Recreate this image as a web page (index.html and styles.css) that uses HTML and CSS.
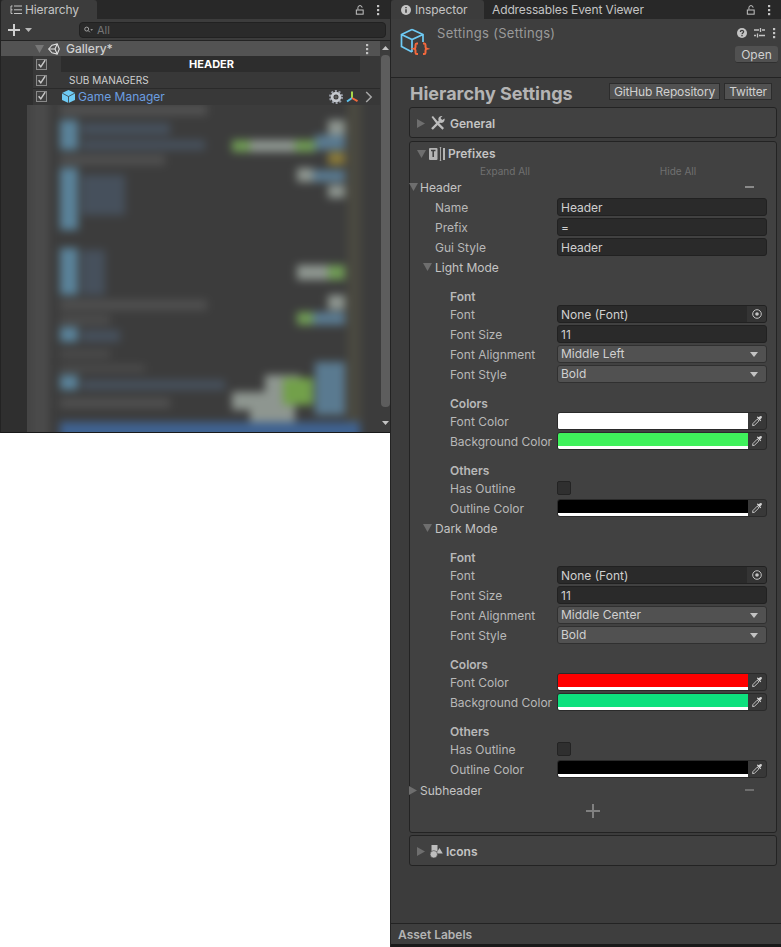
FILE: index.html
```html
<!DOCTYPE html>
<html lang="en">
<head>
<meta charset="utf-8">
<title>Hierarchy Settings</title>
<link rel="stylesheet" href="styles.css">
</head>
<body>
<svg class="defs" width="0" height="0" aria-hidden="true">
  <defs>
    <symbol id="lock" viewBox="0 0 12 12"><path d="M3.500 5.500V3.200a2.500 2.500 0 0 1 5 0" fill="none" stroke="currentColor" stroke-width="1.200"/><rect x="1.600" y="6" width="8.200" height="5" fill="none" stroke="currentColor" stroke-width="1.200"/></symbol>
    <symbol id="kebab" viewBox="0 0 4 12"><rect x="1" y="1" width="2.200" height="2.200"/><rect x="1" y="5" width="2.200" height="2.200"/><rect x="1" y="9" width="2.200" height="2.200"/></symbol>
    <symbol id="check" viewBox="0 0 11 11"><rect x=".5" y=".5" width="10" height="10" fill="#404040" stroke="#8a8a8a"/><path d="M2.600 5.200l2.200 2.600 4.400-6.600" fill="none" stroke="#c8c8c8" stroke-width="1.500"/></symbol>
    <symbol id="dropper" viewBox="0 0 12 12"><path d="M1.600 10.600l.3-2 4.300-4.400 1.700 1.700-4.400 4.300z" fill="none" stroke="#c4c4c4" stroke-width="1"/><path d="M6 2.800l3.400 3.400 .8-.8-1-1 1.400-1.500a1.100 1.100 0 0 0-1.600-1.600L7.600 2.200l-1-1z" fill="#d2d2d2"/></symbol>
  </defs>
</svg>

<main class="page">
  <section class="panel hierarchy">
    <header class="tabbar">
      <div class="tab tab-hier">
        <svg class="tab-icon" viewBox="0 0 12 10"><path d="M1 1h1.500M1 1v7.500h1.500M1 4.800h1.500M4 1h8M4 4.800h8M4 8.500h8" fill="none" stroke="#c4c4c4"/></svg>
        <span>Hierarchy</span>
      </div>
      <div class="tab-actions tab-actions-hier">
        <svg class="ico-lock"><use href="#lock"/></svg>
        <svg class="ico-kebab"><use href="#kebab"/></svg>
      </div>
    </header>
    <div class="toolbar">
      <div class="add-btn">
        <svg class="plus" viewBox="0 0 12 12"><path d="M6 0v12M0 6h12" stroke="#d0d0d0" stroke-width="2"/></svg>
        <svg class="caret" viewBox="0 0 7 4"><path d="M0 0h7L3.500 4z" fill="#b8b8b8"/></svg>
      </div>
      <div class="search">
        <svg class="search-icon" viewBox="0 0 10 8"><circle cx="3" cy="3" r="2.200" fill="none" stroke="#b0b0b0"/><path d="M4.800 4.800l1.700 1.700" stroke="#b0b0b0"/><path d="M7 3h3L8.500 5z" fill="#909090"/></svg>
        <span>All</span>
      </div>
    </div>
    <div class="hier-body">
      <div class="hier-list">
        <div class="scene-row">
          <svg class="scene-tri" viewBox="0 0 9 8"><path d="M0 0h9L4.500 8z" fill="#777"/></svg>
          <svg class="unity-logo" viewBox="0 0 12 12"><path d="M.7 6L4 2.200 9.200 .9 11.300 6 9.200 11.100 4 9.800z" fill="none" stroke="#e0e0e0" stroke-width="1.100"/><path d="M.7 6H7M7 6L9.200 .9M7 6l2.200 5.100" fill="none" stroke="#e0e0e0" stroke-width="1.100"/></svg>
          <span class="scene-name">Gallery*</span>
          <svg class="ico-kebab scene-kebab"><use href="#kebab"/></svg>
        </div>
        <div class="go-row">
          <svg class="chk"><use href="#check"/></svg>
          <div class="go-header">HEADER</div>
        </div>
        <div class="go-row">
          <svg class="chk"><use href="#check"/></svg>
          <div class="go-sub">SUB MANAGERS</div>
        </div>
        <div class="go-row go-row-manager">
          <svg class="chk"><use href="#check"/></svg>
          <svg class="go-cube" viewBox="0 0 13 13"><path d="M6.500 0L13 3v7l-6.500 3L0 10V3z" fill="#6ecbf5"/><path d="M6.500 6.500v6.500M0 3l6.500 3.500L13 3" fill="none" stroke="#383838" stroke-width=".8"/></svg>
          <span class="go-name">Game Manager</span>
          <span class="go-tail">
            <svg class="go-gear" viewBox="0 0 14 14"><circle cx="7" cy="7" r="6" fill="none" stroke="#9a9ea8" stroke-width="2" stroke-dasharray="2 1.770"/><circle cx="7" cy="7" r="3.900" fill="none" stroke="#c4c8ce" stroke-width="2.800"/><circle cx="7" cy="7" r="1.600" fill="#5a5a5a"/></svg>
            <svg class="go-gizmo" viewBox="0 0 14 14"><path d="M7 8V1.500" stroke="#a8d84a" stroke-width="2"/><path d="M7 8l-5 3.500" stroke="#5cc4f0" stroke-width="2"/><path d="M7 8l5.500 3.200" stroke="#f0683c" stroke-width="2"/></svg>
            <svg class="go-chevron" viewBox="0 0 8 12"><path d="M1.200 1l5 5-5 5" fill="none" stroke="#a8a8a8" stroke-width="1.500"/></svg>
          </span>
        </div>
        <div class="blur-wrap">
          <svg class="blur-art" viewBox="0 0 353 328" aria-hidden="true">
            <g class="blur-group">
              <rect x="-10" y="-10" width="373" height="348" fill="#3c3c3c"/>
              <rect x="-10" y="-10" width="30" height="348" fill="#444"/>
              <rect x="6" y="-10" width="16" height="348" fill="#4b4b4b"/>
              <rect x="320" y="-10" width="14" height="330" fill="#4a4940"/>
              <rect x="33" y="0" width="147" height="10" fill="#535353"/>
              <rect x="33" y="15" width="18" height="30" fill="#5a8299"/>
              <rect x="55" y="18" width="88" height="12" fill="#46505c"/>
              <rect x="55" y="35" width="123" height="10" fill="#46505c"/>
              <rect x="205" y="35" width="18" height="12" fill="#6f9a55"/>
              <rect x="223" y="35" width="45" height="12" fill="#8e9690"/>
              <rect x="268" y="35" width="20" height="12" fill="#6f9a55"/>
              <rect x="288" y="30" width="30" height="15" fill="#5a7a90"/>
              <rect x="301" y="15" width="17" height="15" fill="#8e9690"/>
              <rect x="301" y="47" width="17" height="13" fill="#8a7a3a"/>
              <rect x="33" y="50" width="105" height="10" fill="#505050"/>
              <rect x="33" y="63" width="18" height="62" fill="#5a8299"/>
              <rect x="55" y="70" width="43" height="40" fill="#46505c"/>
              <rect x="270" y="63" width="16" height="14" fill="#8e9690"/>
              <rect x="286" y="65" width="32" height="12" fill="#5a7a90"/>
              <rect x="301" y="80" width="17" height="13" fill="#8e9690"/>
              <rect x="33" y="143" width="18" height="47" fill="#5a8299"/>
              <rect x="55" y="145" width="23" height="45" fill="#46505c"/>
              <rect x="270" y="160" width="33" height="15" fill="#8e9690"/>
              <rect x="301" y="160" width="17" height="15" fill="#6f9a55"/>
              <rect x="33" y="195" width="147" height="10" fill="#505050"/>
              <rect x="301" y="190" width="17" height="15" fill="#8e9690"/>
              <rect x="270" y="207" width="16" height="13" fill="#6f9a55"/>
              <rect x="286" y="207" width="32" height="13" fill="#5a7a90"/>
              <rect x="33" y="210" width="50" height="10" fill="#4c4c4c"/>
              <rect x="33" y="222" width="18" height="15" fill="#5a8299"/>
              <rect x="55" y="225" width="38" height="12" fill="#46505c"/>
              <rect x="33" y="245" width="50" height="8" fill="#4c4c4c"/>
              <rect x="33" y="260" width="85" height="7" fill="#4c4c4c"/>
              <rect x="33" y="270" width="18" height="15" fill="#5a8299"/>
              <rect x="55" y="275" width="143" height="10" fill="#46505c"/>
              <rect x="33" y="293" width="110" height="10" fill="#505050"/>
              <rect x="238" y="270" width="35" height="25" fill="#8e9690"/>
              <rect x="205" y="287" width="60" height="18" fill="#8e9690"/>
              <rect x="223" y="300" width="45" height="17" fill="#8e9690"/>
              <rect x="256" y="273" width="30" height="27" fill="#72a04a"/>
              <rect x="288" y="257" width="30" height="53" fill="#5a7a90"/>
              <rect x="33" y="317" width="300" height="20" fill="#3f6290"/>
            </g>
          </svg>
        </div>
      </div>
      <div class="scrollbar">
        <svg class="sb-arrow" viewBox="0 0 7 4"><path d="M0 4h7L3.500 0z" fill="#c4c4c4"/></svg>
        <div class="sb-thumb"></div>
        <svg class="sb-arrow" viewBox="0 0 7 4"><path d="M0 0h7L3.500 4z" fill="#c4c4c4"/></svg>
      </div>
    </div>
  </section>

  <section class="panel inspector">
    <header class="tabbar">
      <div class="tab tab-insp">
        <svg class="tab-icon-info" viewBox="0 0 10 10"><circle cx="5" cy="5" r="5" fill="#c4c4c4"/><path d="M5 4.300v3.400M5 2v1.300" stroke="#3c3c3c" stroke-width="1.500"/></svg>
        <span>Inspector</span>
      </div>
      <div class="tab-plain">Addressables Event Viewer</div>
      <div class="tab-actions tab-actions-insp">
        <svg class="ico-lock"><use href="#lock"/></svg>
        <svg class="ico-kebab"><use href="#kebab"/></svg>
      </div>
    </header>
    <div class="asset-head">
      <svg class="asset-icon" viewBox="0 0 30 29"><path d="M12 1.500L23 6.500V14M12 1.500L1.500 6.500v12L12 24M1.500 6.500L12 11.500 23 6.500M12 11.500V24" fill="none" stroke="#6ecbf5" stroke-width="1.700"/><path d="M18 15.500h-1.300c-1 0-1.200.6-1.200 1.500v2c0 1-.6 1.600-1.300 1.800.7.200 1.300.8 1.300 1.800v2c0 1 .2 1.500 1.200 1.500H18M23 15.500h1.300c1 0 1.200.6 1.200 1.500v2c0 1 .6 1.600 1.300 1.800-.7.200-1.300.8-1.300 1.800v2c0 1-.2 1.500-1.200 1.500H23" fill="none" stroke="#f4683c" stroke-width="2"/></svg>
      <div class="asset-title">Settings (Settings)</div>
      <div class="asset-side">
        <div class="asset-tools">
          <svg class="tool-help" viewBox="0 0 10 10"><circle cx="5" cy="5" r="5" fill="#c4c4c4"/><path d="M3.400 3.900C3.400 2 6.600 2 6.600 3.800 6.600 5 5 4.900 5 6.300M5 7v1.300" fill="none" stroke="#3c3c3c" stroke-width="1.300"/></svg>
          <svg class="tool-sliders" viewBox="0 0 11 10"><path d="M0 2h5M8 2h3M0 7.500h2M5 7.500h6M6.500 0v4M3.500 5.500v4" stroke="#c4c4c4" stroke-width="1.300" fill="none"/></svg>
          <svg class="ico-kebab"><use href="#kebab"/></svg>
        </div>
        <div class="open-btn">Open</div>
      </div>
    </div>
    <div class="settings">
      <div class="settings-title">
        <h1>Hierarchy Settings</h1>
        <div class="link-btn">GitHub Repository</div>
        <div class="link-btn">Twitter</div>
      </div>

      <div class="box box-general">
        <svg class="tri-r box-tri" viewBox="0 0 8 9"><path d="M0 0l8 4.500L0 9z"/></svg>
        <svg class="box-icon-tools" viewBox="0 0 16 16"><path d="M2 14L9.500 6.500" stroke="#bdbdbd" stroke-width="2.400"/><path d="M14.500 3.500a3.500 3.500 0 0 1-5 4l-1-2a3.500 3.500 0 0 1 4-4.500l-2 2 1.700 2z" fill="#bdbdbd"/><path d="M1.500 2l1.500-1L9 8l5 5-1.500 1.800L7 9.500z" fill="#bdbdbd"/></svg>
        <span class="box-title">General</span>
      </div>

      <div class="box box-prefixes">
        <div class="prefix-head">
          <svg class="tri-d box-tri" viewBox="0 0 9 8"><path d="M0 0h9L4.500 8z"/></svg>
          <svg class="box-icon-t" viewBox="0 0 16 14"><rect x="0" y="1" width="8.500" height="12" rx="1" fill="#b4b4b4"/><path d="M2 3.500h4.500M4.200 3.500V10" stroke="#3c3c3c" stroke-width="1.500"/><path d="M10.500 0h2M10.500 14h2M11.500 0v14" stroke="#a8a8a8"/><rect x="14" y="1" width="2" height="12" fill="#b4b4b4"/></svg>
          <span class="box-title">Prefixes</span>
        </div>
        <div class="expand-row"><span>Expand All</span><span>Hide All</span></div>

        <div class="item-row">
          <svg class="tri-d item-tri" viewBox="0 0 9 8"><path d="M0 0h9L4.500 8z"/></svg>
          <span class="item-name">Header</span>
          <span class="minus"></span>
        </div>
        <div class="row"><label class="lab lab-1">Name</label><div class="field">Header</div></div>
        <div class="row"><label class="lab lab-1">Prefix</label><div class="field">=</div></div>
        <div class="row"><label class="lab lab-1">Gui Style</label><div class="field">Header</div></div>

        <div class="mode-row"><svg class="tri-d" viewBox="0 0 9 8"><path d="M0 0h9L4.500 8z"/></svg><span>Light Mode</span></div>
        <h3 class="group">Font</h3>
        <div class="row"><label class="lab">Font</label><div class="field field-obj"><span class="field-text">None (Font)</span><span class="obj-btn"><svg class="target" viewBox="0 0 10 10"><circle cx="5" cy="5" r="4.300" fill="none" stroke="#c4c4c4"/><circle cx="5" cy="5" r="1.800" fill="#c4c4c4"/></svg></span></div></div>
        <div class="row"><label class="lab">Font Size</label><div class="field">11</div></div>
        <div class="row"><label class="lab">Font Alignment</label><div class="select"><span>Middle Left</span><svg class="select-caret" viewBox="0 0 8 5"><path d="M0 0h8L4 5z"/></svg></div></div>
        <div class="row"><label class="lab">Font Style</label><div class="select"><span>Bold</span><svg class="select-caret" viewBox="0 0 8 5"><path d="M0 0h8L4 5z"/></svg></div></div>
        <h3 class="group">Colors</h3>
        <div class="row"><label class="lab">Font Color</label><div class="color"><span class="swatch swatch-white"></span><span class="drop-btn"><svg class="dropper"><use href="#dropper"/></svg></span></div></div>
        <div class="row"><label class="lab">Background Color</label><div class="color"><span class="swatch swatch-green"></span><span class="drop-btn"><svg class="dropper"><use href="#dropper"/></svg></span></div></div>
        <h3 class="group">Others</h3>
        <div class="row"><label class="lab">Has Outline</label><span class="checkbox"></span></div>
        <div class="row"><label class="lab">Outline Color</label><div class="color"><span class="swatch swatch-black"></span><span class="drop-btn"><svg class="dropper"><use href="#dropper"/></svg></span></div></div>

        <div class="mode-row"><svg class="tri-d" viewBox="0 0 9 8"><path d="M0 0h9L4.500 8z"/></svg><span>Dark Mode</span></div>
        <h3 class="group">Font</h3>
        <div class="row"><label class="lab">Font</label><div class="field field-obj"><span class="field-text">None (Font)</span><span class="obj-btn"><svg class="target" viewBox="0 0 10 10"><circle cx="5" cy="5" r="4.300" fill="none" stroke="#c4c4c4"/><circle cx="5" cy="5" r="1.800" fill="#c4c4c4"/></svg></span></div></div>
        <div class="row"><label class="lab">Font Size</label><div class="field">11</div></div>
        <div class="row"><label class="lab">Font Alignment</label><div class="select"><span>Middle Center</span><svg class="select-caret" viewBox="0 0 8 5"><path d="M0 0h8L4 5z"/></svg></div></div>
        <div class="row"><label class="lab">Font Style</label><div class="select"><span>Bold</span><svg class="select-caret" viewBox="0 0 8 5"><path d="M0 0h8L4 5z"/></svg></div></div>
        <h3 class="group">Colors</h3>
        <div class="row"><label class="lab">Font Color</label><div class="color"><span class="swatch swatch-red"></span><span class="drop-btn"><svg class="dropper"><use href="#dropper"/></svg></span></div></div>
        <div class="row"><label class="lab">Background Color</label><div class="color"><span class="swatch swatch-teal"></span><span class="drop-btn"><svg class="dropper"><use href="#dropper"/></svg></span></div></div>
        <h3 class="group">Others</h3>
        <div class="row"><label class="lab">Has Outline</label><span class="checkbox"></span></div>
        <div class="row"><label class="lab">Outline Color</label><div class="color"><span class="swatch swatch-black"></span><span class="drop-btn"><svg class="dropper"><use href="#dropper"/></svg></span></div></div>

        <div class="item-row item-row-last">
          <svg class="tri-r item-tri" viewBox="0 0 8 9"><path d="M0 0l8 4.500L0 9z"/></svg>
          <span class="item-name">Subheader</span>
          <span class="minus minus-dim"></span>
        </div>
        <div class="add-row"><svg class="add-plus" viewBox="0 0 14 14"><path d="M7 0v14M0 7h14" stroke="#808080" stroke-width="2"/></svg></div>
      </div>

      <div class="box box-icons">
        <svg class="tri-r box-tri" viewBox="0 0 8 9"><path d="M0 0l8 4.500L0 9z"/></svg>
        <svg class="box-icon-shapes" viewBox="0 0 13 13"><rect x="1.500" y="0" width="6" height="6.500" fill="#bdbdbd"/><path d="M9.500 3L12.800 8.500H6.200z" fill="#bdbdbd"/><circle cx="3.800" cy="9.300" r="3.700" fill="#bdbdbd" stroke="#414141" stroke-width=".6"/></svg>
        <span class="box-title">Icons</span>
      </div>
    </div>
    <footer class="labels-bar">Asset Labels</footer>
  </section>
</main>
</body>
</html>
```
FILE: styles.css
```css
* { box-sizing: border-box; }
html, body { margin: 0; padding: 0; background: #fff; }
body { font-family: Inter, "Liberation Sans", sans-serif; font-size: 12px; color: #c4c4c4; width: 781px; height: 947px; overflow: hidden; }
.defs { display: block; height: 0; }
svg { display: block; flex: none; }

.page { display: flex; align-items: flex-start; width: 781px; }
.panel { display: flex; flex-direction: column; }
.hierarchy { width: 390px; height: 433px; background: #282828; border-bottom: 1px solid #191919; border-left: 1px solid #232323; }
.inspector { width: 391px; height: 947px; background: #3c3c3c; border-left: 1px solid #232323; }

/* tabs */
.tabbar { display: flex; align-items: stretch; height: 19px; background: #282828; flex: none; letter-spacing: -.1px; }
.tab { display: flex; align-items: center; background: #3c3c3c; border-radius: 3px 3px 0 0; }
.tab-hier { width: 96px; padding-left: 9px; gap: 3px; }
.tab-insp { width: 93px; padding-left: 10px; gap: 4px; }
.tab-plain { display: flex; align-items: center; margin-left: 8px; letter-spacing: -.12px; }
.tab-icon { width: 12px; height: 10px; }
.tab-icon-info { width: 10px; height: 10px; }
.tab-actions { margin-left: auto; display: flex; align-items: center; gap: 11px; }
.tab-actions-hier { padding-right: 10px; }
.tab-actions-insp { padding-right: 10px; }
.ico-lock { width: 10px; height: 10px; color: #c4c4c4; }
.ico-kebab { width: 4px; height: 12px; fill: #c4c4c4; }

/* hierarchy toolbar */
.toolbar { display: flex; align-items: center; height: 22px; background: #3c3c3c; border-bottom: 1px solid #232323; flex: none; }
.add-btn { display: flex; align-items: center; width: 78px; padding-left: 7px; gap: 5px; }
.plus { width: 12px; height: 12px; }
.caret { width: 7px; height: 4px; }
.search { display: flex; align-items: center; gap: 4px; width: 307px; height: 16px; background: #2a2a2a; border: 1px solid #212121; border-radius: 4px; padding-left: 4px; color: #767676; font-size: 11px; }
.search-icon { width: 9px; height: 8px; }

.hier-body { display: flex; flex: 1; min-height: 0; overflow: hidden; background: #3c3c3c; }
.hier-list { flex: 1; min-width: 0; background: #2f2f2f; display: flex; flex-direction: column; }
.scene-row { display: flex; align-items: center; height: 15px; background: #535353; padding-left: 34px; flex: none; }
.scene-tri { width: 9px; height: 8px; }
.unity-logo { width: 12px; height: 12px; margin-left: 4px; }
.scene-name { margin-left: 6px; font-weight: 500; color: #cfcfcf; }
.scene-kebab { margin-left: auto; margin-right: 12px; }

.go-row { display: flex; align-items: center; height: 16px; margin-left: 32px; background: #383838; width: 347px; flex: none; }
.go-row-manager { height: 17px; padding-bottom: 1px; border-top: 1px solid #2a2a2a; }
.chk { width: 11px; height: 11px; margin-left: 3px; }
.go-header { width: 299px; height: 16px; line-height: 16px; margin-left: 14px; padding-left: 2px; background: #2d2d2d; color: #fff; font-weight: 700; font-size: 11px; text-align: center; }
.go-sub { margin-left: 22px; font-size: 10px; color: #d0d0d0; }
.go-cube { width: 13px; height: 13px; margin-left: 15px; }
.go-name { margin-left: 3px; color: #6b9ee0; }
.go-tail { margin-left: auto; display: flex; align-items: center; padding-right: 7px; }
.go-gear { width: 14px; height: 14px; }
.go-gizmo { width: 14px; height: 14px; margin-left: 2px; }
.go-chevron { width: 8px; height: 12px; margin-left: 6px; }

.blur-wrap { margin-left: 26px; width: 353px; height: 328px; overflow: hidden; flex: none; }
.blur-art { width: 353px; height: 328px; }
.blur-group { filter: blur(4.5px); }

.scrollbar { width: 10px; display: flex; flex-direction: column; align-items: center; padding-top: 5px; background: #3c3c3c; margin-left: -1px; position: relative; }
.sb-arrow { width: 7px; height: 4px; }
.sb-thumb { width: 9px; height: 352px; margin-top: 5px; margin-bottom: 14px; background: #5d5d5d; border-radius: 4px; }

/* inspector asset header */
.asset-head { display: flex; height: 59px; padding: 6px 0 0 9px; border-bottom: 1px solid #232323; background: #3e3e3e; flex: none; }
.asset-icon { width: 30px; height: 29px; margin-top: 3px; }
.asset-title { margin-left: 7px; margin-top: 1px; font-size: 13px; line-height: 15px; letter-spacing: .3px; color: #9a9a9a; }
.asset-side { margin-left: auto; display: flex; flex-direction: column; align-items: flex-end; padding-right: 3px; }
.asset-tools { display: flex; align-items: center; gap: 7px; height: 14px; margin-top: 1px; padding-right: 2px; }
.tool-help { width: 10px; height: 10px; }
.tool-sliders { width: 11px; height: 10px; }
.open-btn { margin-top: 6px; width: 43px; height: 17px; line-height: 17px; text-align: center; background: #515151; border-radius: 3px; color: #d0d0d0; border-bottom: 1px solid #303030; }

.settings { flex: 1; padding: 0 3px 0 18px; display: flex; flex-direction: column; }
.settings-title { display: flex; align-items: center; height: 29px; padding: 1px 6px 0 0; }
.settings-title h1 { margin: 0 auto 0 1px; font-size: 18px; font-weight: 700; color: #b4b4b4; line-height: 27px; }
.link-btn { height: 17px; line-height: 15px; padding: 0 4px; border: 1px solid #2c2c2c; background: #515151; color: #d0d0d0; margin-left: 4px; margin-top: -3px; letter-spacing: -.12px; white-space: nowrap; }

.box { background: #414141; border: 1px solid #232323; border-radius: 3px; width: 368px; }
.box-general { display: flex; align-items: center; height: 31px; padding: 1px 0 0 7px; }
.box-icons { display: flex; align-items: center; height: 31px; padding: 1px 0 0 7px; margin-top: 2px; }
.box-prefixes { height: 692px; margin-top: 3px; }
.box-tri { fill: #6e6e6e; }
.tri-r { width: 8px; height: 9px; fill: #6e6e6e; }
.tri-d { width: 9px; height: 8px; fill: #6e6e6e; }
.box-title { font-weight: 600; color: #c4c4c4; }
.box-icon-tools { width: 16px; height: 16px; margin-left: 5px; margin-right: 4px; }
.box-icon-shapes { width: 13px; height: 13px; margin-left: 5px; margin-right: 3px; }
.box-icon-t { width: 16px; height: 14px; margin-left: 3px; margin-right: 3px; }

.prefix-head { display: flex; align-items: center; height: 23px; padding-left: 7px; }
.expand-row { display: grid; grid-template-columns: 190px 156px; height: 12px; font-size: 10px; line-height: 12px; color: #707070; text-align: center; }
.item-row { display: flex; align-items: center; height: 20px; margin-left: -1px; }
.item-row-last { padding-top: 2px; }
.item-tri { margin-right: 2px; }
.tri-r.item-tri { margin-right: 3px; }
.item-name { color: #c4c4c4; }
.minus { width: 9px; height: 2px; background: #8a8a8a; margin-left: auto; margin-right: 22px; }
.minus-dim { background: #6e6e6e; }

.row { display: grid; grid-template-columns: 147px 210px; align-items: center; height: 20px; }
.lab { padding-left: 40px; color: #b8b8b8; white-space: nowrap; }
.lab-1 { padding-left: 25px; }
.mode-row { display: flex; align-items: center; height: 20px; padding-left: 13px; gap: 3px; color: #c4c4c4; }
.group { margin: 10px 0 0; height: 17px; line-height: 20px; padding-left: 40px; font-size: 12px; font-weight: 600; color: #b8b8b8; }

.field { display: flex; align-items: center; height: 18px; background: #2a2a2a; border: 1px solid #212121; border-radius: 3px; padding-left: 3px; color: #d0d0d0; }
.field-obj { overflow: hidden; }
.field-text { flex: 1; }
.obj-btn { display: flex; align-items: center; justify-content: center; width: 19px; height: 16px; background: #343434; }
.target { width: 10px; height: 10px; }
.select { display: flex; align-items: center; justify-content: space-between; height: 18px; background: #515151; border: 1px solid #303030; border-radius: 3px; padding: 0 8px 0 3px; color: #d0d0d0; }
.select span { position: relative; top: -1px; }
.select-caret { width: 8px; height: 5px; fill: #c4c4c4; }
.color { display: flex; height: 18px; border: 1px solid #2a2a2a; border-radius: 3px; background: #383838; overflow: hidden; }
.swatch { display: block; flex: 1; border-bottom: 3px solid #fff; }
.swatch-white { background: #fff; }
.swatch-green { background: #3ff25b; }
.swatch-black { background: #000; }
.swatch-red { background: #ff0000; }
.swatch-teal { background: #0ee07e; }
.drop-btn { display: flex; align-items: center; justify-content: center; width: 18px; }
.dropper { width: 12px; height: 12px; }
.checkbox { display: block; width: 14px; height: 14px; background: #2f2f2f; border: 1px solid #232323; border-radius: 2px; }

.add-row { display: flex; justify-content: center; padding-top: 5px; }
.add-plus { width: 14px; height: 14px; }

.labels-bar { height: 24px; line-height: 22px; padding-left: 7px; border-top: 1px solid #232323; border-bottom: 3px solid #191919; background: #3e3e3e; font-weight: 600; color: #b4b4b4; flex: none; }
```
